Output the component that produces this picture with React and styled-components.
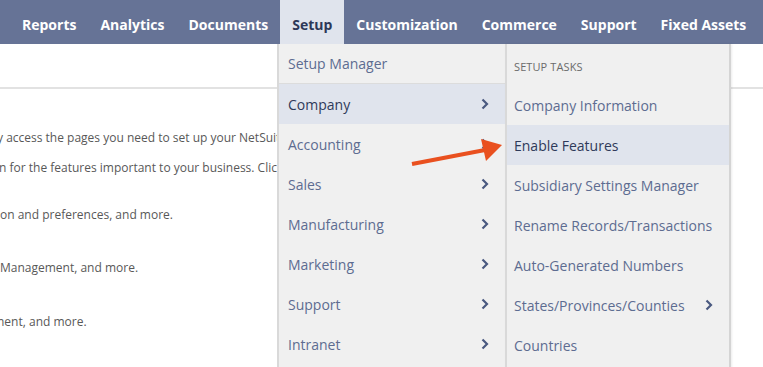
import React from 'react';
import styled, { createGlobalStyle } from 'styled-components';

const GlobalStyle = createGlobalStyle`
  html, body {
    margin: 0;
    padding: 0;
    background: #ffffff;
    font-family: "Open Sans", "Liberation Sans", sans-serif;
    overflow: hidden;
  }
`;

const Page = styled.div`
  position: relative;
  width: 763px;
  height: 367px;
  overflow: hidden;
`;

const NavBar = styled.nav`
  display: flex;
  height: 44px;
  padding-left: 10px;
  background: #667396;
`;

const NavItem = styled.div`
  display: flex;
  align-items: center;
  padding: 4px 12px 0;
  font-size: 14px;
  font-weight: 700;
  white-space: nowrap;
  color: ${p => (p.active ? '#2d3858' : '#ffffff')};
  background: ${p => (p.active ? '#e0e4ed' : 'transparent')};
`;

const Header = styled.div`
  height: 43px;
  border-bottom: 2px solid #e2e2e2;
`;

const Content = styled.div`
  padding-top: 34px;
  overflow: hidden;
`;

const Line = styled.p`
  margin: ${p => p.gap || 0}px 0 0 ${p => p.shift || 0}px;
  line-height: 30px;
  font-size: 12px;
  color: #585858;
  white-space: nowrap;
`;

const Dropdown = styled.div`
  position: absolute;
  top: 44px;
  left: 277px;
  display: flex;
  height: 330px;
`;

const Panel = styled.div`
  width: ${p => p.width}px;
  background: #f0f0f0;
  border-left: 2px solid #d9d9d9;
  border-right: ${p => (p.last ? '2px solid #d4d4d4' : 'none')};
  box-shadow: ${p => (p.last ? '1px 0 2px rgba(0,0,0,0.08)' : 'none')};
`;

const Row = styled.div`
  display: flex;
  align-items: center;
  justify-content: space-between;
  height: 40px;
  padding: 0 16px 0 ${p => p.indent}px;
  box-sizing: border-box;
  font-size: 14px;
  white-space: nowrap;
  color: ${p => (p.active ? '#2f3a5a' : '#5d6c91')};
  background: ${p => (p.active ? '#e0e4ed' : 'transparent')};
  border-bottom: ${p => (p.divider ? '1px solid #dcdcdc' : 'none')};
`;

const SectionTitle = styled.div`
  display: flex;
  align-items: center;
  height: 41px;
  padding: 3px 0 0 7px;
  box-sizing: border-box;
  font-size: 11px;
  letter-spacing: 0.1px;
  color: #6b6b6b;
  text-transform: uppercase;
`;

const Chevron = () => (
  <svg width="8" height="12" viewBox="0 0 8 12">
    <polyline points="1.5,1.5 6,6 1.5,10.5" fill="none" stroke="#4a5980" strokeWidth="2.2" />
  </svg>
);

const Arrow = styled.svg`
  position: absolute;
  left: 405px;
  top: 132px;
`;

const navItems = ['Reports', 'Analytics', 'Documents', 'Setup', 'Customization', 'Commerce', 'Support', 'Fixed Assets'];

const categories = ['Company', 'Accounting', 'Sales', 'Manufacturing', 'Marketing', 'Support', 'Intranet'];

const tasks = [
  { label: 'Company Information' },
  { label: 'Enable Features', active: true },
  { label: 'Subsidiary Settings Manager' },
  { label: 'Rename Records/Transactions' },
  { label: 'Auto-Generated Numbers' },
  { label: 'States/Provinces/Counties', sub: true },
  { label: 'Countries' },
];

const App = () => (
  <Page>
    <GlobalStyle />
    <NavBar>
      {navItems.map(item => (
        <NavItem key={item} active={item === 'Setup'}>{item}</NavItem>
      ))}
    </NavBar>
    <Header />
    <Content>
      <Line shift={-3}>y access the pages you need to set up your NetSuite account.</Line>
      <Line shift={-1}>n for the features important to your business. Click a link to get started.</Line>
      <Line gap={17}>on and preferences, and more.</Line>
      <Line gap={23}>Management, and more.</Line>
      <Line gap={24} shift={-3}>nent, and more.</Line>
    </Content>

    <Dropdown>
      <Panel width={226}>
        <Row divider indent={9}>Setup Manager</Row>
        {categories.map((c, i) => (
          <Row key={c} indent={9} active={i === 0}>
            {c}
            <Chevron />
          </Row>
        ))}
      </Panel>
      <Panel width={222} last>
        <SectionTitle>Setup Tasks</SectionTitle>
        {tasks.map(t => (
          <Row key={t.label} indent={7} active={t.active}>
            {t.label}
            {t.sub && <Chevron />}
          </Row>
        ))}
      </Panel>
    </Dropdown>

    <Arrow width="100" height="40" viewBox="0 0 100 40">
      <line x1="7" y1="32" x2="80" y2="18" stroke="#e9501f" strokeWidth="4" />
      <polygon points="97,13 76,7 81,29" fill="#e9501f" />
    </Arrow>
  </Page>
);

export default App;
